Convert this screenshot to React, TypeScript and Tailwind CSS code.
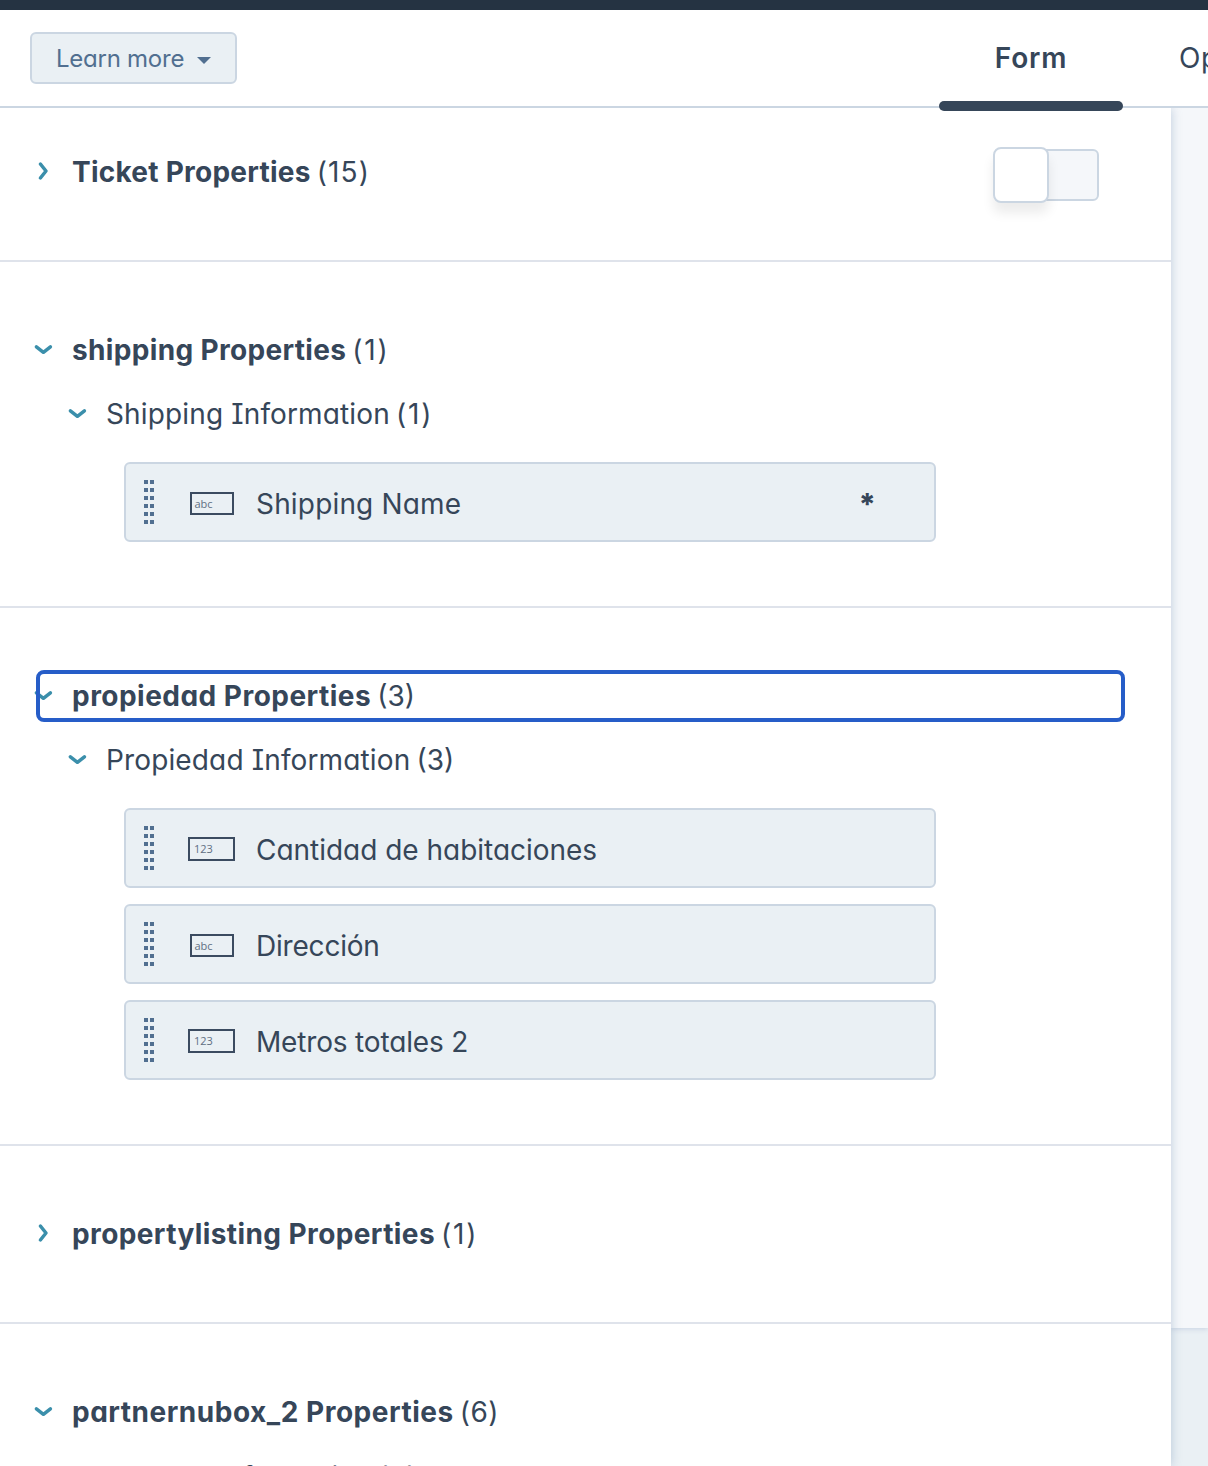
import clsx from 'clsx';

type Field = { label: string; type: 'abc' | '123'; required?: boolean; tracking?: string };

type Group = {
  title: string;
  count: number;
  tracking: string;
  countTracking: string;
  open?: boolean;
  focused?: boolean;
  info?: string;
  fields?: Field[];
};

const groups: Group[] = [
  { title: 'Ticket Properties', count: 15, tracking: 'tracking-[0.25px]', countTracking: 'tracking-[1.1px]' },
  {
    title: 'shipping Properties',
    count: 1,
    tracking: 'tracking-[0.34px]',
    countTracking: 'tracking-[1.8px]',
    open: true,
    info: 'Shipping Information',
    fields: [{ label: 'Shipping Name', type: 'abc', required: true, tracking: 'tracking-[0.17px]' }],
  },
  {
    title: 'propiedad Properties',
    count: 3,
    tracking: 'tracking-[0.48px]',
    countTracking: 'tracking-[0px]',
    open: true,
    focused: true,
    info: 'Propiedad Information',
    fields: [
      { label: 'Cantidad de habitaciones', type: '123', tracking: 'tracking-[-0.02px]' },
      { label: 'Dirección', type: 'abc', tracking: 'tracking-[-0.2px]' },
      { label: 'Metros totales 2', type: '123', tracking: 'tracking-[-0.17px]' },
    ],
  },
  { title: 'propertylisting Properties', count: 1, tracking: 'tracking-[0.4px]', countTracking: 'tracking-[1.8px]' },
  {
    title: 'partnernubox_2 Properties',
    count: 6,
    tracking: 'tracking-[0.52px]',
    countTracking: 'tracking-[0.5px]',
    open: true,
    info: 'Partner Information',
  },
];

function Chevron({ open }: { open?: boolean }) {
  return (
    <svg
      viewBox="0 0 20 20"
      className={clsx('size-5 shrink-0', !open && '-mt-0.5 -rotate-90')}
      fill="none"
      stroke="#3b8fab"
      strokeWidth="3.5"
      strokeLinecap="round"
      strokeLinejoin="round"
    >
      <path d={open ? 'M3.4 6.8 10.4 12.3 17.4 6.8' : 'M3 7.4 10 13 17 7.4'} />
    </svg>
  );
}

function Grip() {
  return (
    <div className="grid grid-cols-2 gap-x-0.5 gap-y-1">
      {Array.from({ length: 12 }, (_, i) => (
        <span key={i} className="size-1 bg-[#516f90]" />
      ))}
    </div>
  );
}

function TypeIcon({ type }: { type: Field['type'] }) {
  return (
    <div className="mt-0.5 flex w-[47px] shrink-0 justify-center">
      <div
        className={clsx(
          "flex items-center border-2 border-[#3b4b60] font-['Open_Sans'] text-[11px] leading-none font-medium text-[#5f6f83]",
          type === 'abc' ? 'h-[23px] w-[44px] pl-[3px]' : 'h-[24px] w-[47px] pb-px pl-[4px]',
        )}
      >
        {type}
      </div>
    </div>
  );
}

function FieldCard({ field }: { field: Field }) {
  return (
    <div className="flex h-20 w-[812px] items-center rounded-md border-2 border-[#cbd6e2] bg-[#eaf0f4] pl-[18px] pr-[58px]">
      <Grip />
      <div className="ml-[34px]">
        <TypeIcon type={field.type} />
      </div>
      <span className={clsx('ml-[21px] mt-1 flex-1 whitespace-nowrap', field.tracking)}>{field.label}</span>
      {field.required && <span className="mt-[3px] text-[30px] font-extrabold">*</span>}
    </div>
  );
}

function Toggle() {
  return (
    <div className="-mr-[26px] flex h-14 w-[106px] shrink-0 items-center">
      <div className="z-10 size-14 rounded-lg border-2 border-[#cbd6e2] bg-white shadow-[0_10px_12px_rgba(0,0,0,0.08)]" />
      <div className="-ml-2 h-[52px] flex-1 rounded-md border-2 border-[#cbd6e2] bg-[#f5f7fa]" />
    </div>
  );
}

function PropertyGroup({ group, first }: { group: Group; first?: boolean }) {
  return (
    <section
      className={clsx(
        'border-b-2 border-[#dfe3eb] pl-10',
        first ? 'pt-[42px]' : 'pt-[66px]',
        group.fields ? 'pb-16' : 'pb-[66px]',
      )}
    >
      <div
        className={clsx(
          'flex h-11 w-[1081px] items-center rounded',
          group.focused && 'outline-4 outline-[#265dc8]',
        )}
      >
        <div className="-ml-[7px] mr-[19px]">
          <Chevron open={group.open} />
        </div>
        <span className={clsx('whitespace-nowrap font-bold', group.tracking)}>{group.title}</span>
        <span className={clsx('ml-1.5 flex-1', group.countTracking)}>({group.count})</span>
        {first && (
          <div className="mr-12 mt-1.5">
            <Toggle />
          </div>
        )}
      </div>
      {group.info && (
        <div className={clsx('flex h-11 items-center pl-[27px]', group.fields ? 'mt-5' : 'mt-[21px]')}>
          <Chevron open />
          <span className="ml-[19px] whitespace-nowrap tracking-[0.14px]">{group.info}</span>
          <span className={clsx('ml-1.5', group.countTracking)}>({group.count})</span>
        </div>
      )}
      {group.fields && (
        <div className="mt-[26px] flex flex-col gap-4 pl-[84px]">
          {group.fields.map((field) => (
            <FieldCard key={field.label} field={field} />
          ))}
        </div>
      )}
    </section>
  );
}

export default function App() {
  return (
    <div className="flex h-[1466px] w-[1208px] flex-col overflow-hidden bg-white font-['Inter',sans-serif] text-[28px] font-normal leading-[44px] text-[#364659] [font-feature-settings:'cv08','cv11']">
      <div className="h-2.5 shrink-0 bg-[#253342]" />
      <header className="relative z-20 flex h-[98px] shrink-0 items-start border-b-2 border-[#cbd6e2] bg-white">
        <button className="ml-[30px] mt-[22px] flex h-[52px] w-[207px] shrink-0 items-center rounded-md border-2 border-[#cbd6e2] bg-[#eaf0f4] pl-6 text-2xl text-[#516f90]">
          <span className="mt-0.5 whitespace-nowrap tracking-[-0.25px]">Learn more</span>
          <svg viewBox="0 0 14 7" className="ml-auto mr-6 mt-1 h-[7px] w-3.5 fill-[#516f90]">
            <path d="M0 0h14L7 7z" />
          </svg>
        </button>
        <nav className="ml-[702px] flex shrink-0">
          <div className="flex h-[101px] w-[184px] shrink-0 flex-col items-center">
            <span className="mt-[26px] font-semibold tracking-[0.8px]">Form</span>
            <span className="mt-auto h-2.5 w-full shrink-0 rounded-full bg-[#364659]" />
          </div>
          <span className="ml-14 mt-[26px] tracking-[0.5px]">Options</span>
        </nav>
      </header>
      <div className="flex min-h-0 flex-1">
        <main className="z-10 w-[1171px] shrink-0 bg-white shadow-[0_0_10px_rgba(120,150,185,0.45)]">
          {groups.map((group, i) => (
            <PropertyGroup key={group.title} group={group} first={i === 0} />
          ))}
        </main>
        <aside className="flex flex-1 flex-col bg-[#eaf0f4]">
          <div className="h-[1220px] bg-[#f5f7fa] shadow-[0_1px_5px_rgba(150,165,200,0.4)]" />
        </aside>
      </div>
    </div>
  );
}
